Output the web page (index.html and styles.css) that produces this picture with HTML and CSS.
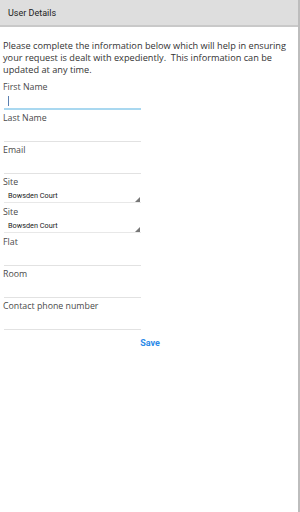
FILE: index.html
```html
<!DOCTYPE html>
<html>
<head>
<meta charset="utf-8">
<link rel="stylesheet" href="styles.css">
</head>
<body>
<div class="page">
  <header class="bar"><span class="title">User Details</span></header>
  <main class="content">
    <p class="intro">Please complete the information below which will help in ensuring your request is dealt with expediently.&nbsp; This information can be updated at any time.</p>
    <div class="field first">
      <div class="label">First Name</div>
      <div class="input focused"><span class="caret"></span></div>
    </div>
    <div class="field">
      <div class="label">Last Name</div>
      <div class="input"></div>
    </div>
    <div class="field">
      <div class="label">Email</div>
      <div class="input"></div>
    </div>
    <div class="field sel">
      <div class="label">Site</div>
      <div class="select"><span>Bowsden Court</span><span class="tri"></span></div>
    </div>
    <div class="field sel">
      <div class="label">Site</div>
      <div class="select"><span>Bowsden Court</span><span class="tri"></span></div>
    </div>
    <div class="field">
      <div class="label">Flat</div>
      <div class="input"></div>
    </div>
    <div class="field">
      <div class="label">Room</div>
      <div class="input"></div>
    </div>
    <div class="field">
      <div class="label">Contact phone number</div>
      <div class="input"></div>
    </div>
    <div class="actions"><span class="save">Save</span></div>
  </main>
</div>
</body>
</html>
```
FILE: styles.css
```css
html, body {
  margin: 0;
  padding: 0;
  background: #ffffff;
}
.page {
  width: 298px;
  height: 512px;
  border-right: 2px solid #bdbdbd;
  font-family: "Open Sans", sans-serif;
  color: #333333;
}
.bar {
  height: 27px;
  box-sizing: border-box;
  background: #dedede;
  border-bottom: 2px solid #c9c9c9;
  display: flex;
  align-items: center;
  padding-left: 8px;
}
.title {
  font-family: Roboto, sans-serif;
  font-size: 9px;
  color: #222222;
}
.content {
  padding: 0 3px;
}
.intro {
  margin: 13px 0 5px 0;
  font-size: 9.2px;
  line-height: 12px;
  color: #333333;
}
.field {
  width: 138px;
  margin-bottom: 2px;
}
.label {
  font-size: 8.8px;
  line-height: 12px;
  color: #4a4a4a;
}
.input {
  height: 17px;
  border-bottom: 1px solid #e2e2e2;
  margin-left: 1px;
  position: relative;
}
.input.focused {
  border-bottom: 2px solid #a9d8f0;
  height: 15px;
}
.caret {
  position: absolute;
  left: 4px;
  top: 3px;
  width: 1px;
  height: 10px;
  background: #5a7fb0;
}
.field.sel {
  margin-bottom: 3px;
}
.select {
  height: 14px;
  border-bottom: 1px solid #e8e8e8;
  margin-left: 1px;
  display: flex;
  align-items: center;
  justify-content: space-between;
  font-family: Roboto, sans-serif;
  font-size: 7.3px;
  color: #222222;
  padding-left: 4px;
}
.tri {
  width: 0;
  height: 0;
  border-left: 5px solid transparent;
  border-bottom: 5px solid #777777;
  align-self: flex-end;
  margin-right: 1px;
}
.actions {
  width: 294px;
  display: flex;
  justify-content: center;
  margin-top: 8px;
}
.save {
  font-family: Roboto, sans-serif;
  font-weight: bold;
  font-size: 9px;
  color: #2b8ae8;
}
```
